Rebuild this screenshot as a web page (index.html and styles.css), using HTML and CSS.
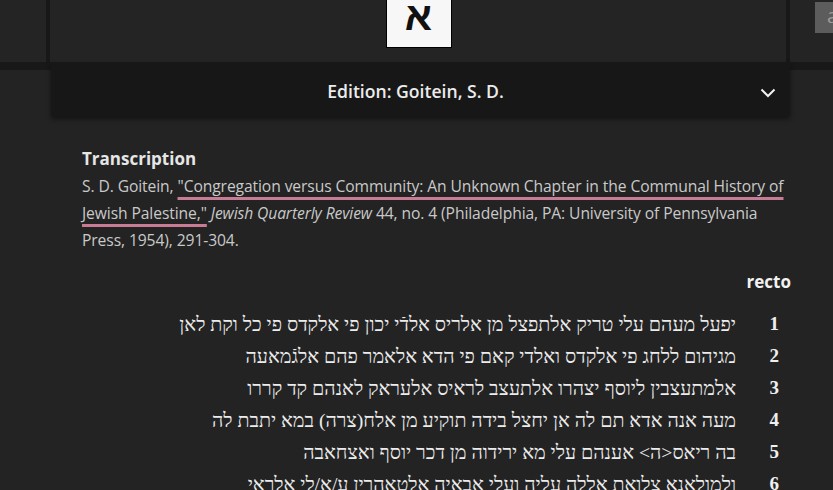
FILE: index.html
```html
<!DOCTYPE html>
<html lang="en">
<head>
<meta charset="utf-8">
<title>Document</title>
<link rel="stylesheet" href="styles.css">
</head>
<body>
<div class="viewer">
  <div class="panel panel-left"></div>
  <div class="panel panel-main">
    <div class="placeholder">א</div>
  </div>
  <div class="panel panel-right">
    <div class="tool-btn">a</div>
  </div>
</div>
<div class="band"></div>
<div class="edition">
  <span class="edition-title">Edition: Goitein, S. D.</span>
  <svg class="chevron" width="16" height="10" viewBox="0 0 16 10"><path d="M1.5 1.5 L8 8 L14.5 1.5" fill="none" stroke="#f2f2f2" stroke-width="2"/></svg>
</div>
<section class="transcription">
  <h2 class="heading">Transcription</h2>
  <p class="citation">S. D. Goitein, <a class="link">"Congregation versus Community: An Unknown Chapter in the Communal History of Jewish Palestine,"</a> <em>Jewish Quarterly Review</em> 44, no. 4 (Philadelphia, PA: University of Pennsylvania Press, 1954), 291-304.</p>
  <div class="side-label">recto</div>
  <ol class="lines">
    <li><span class="num">1</span><span class="txt">יפעל מעהם עלי טריק אלתפצל מן אלריס אלדֿי יכון פי אלקדס פי כל וקת לאן</span></li>
    <li><span class="num">2</span><span class="txt">מגיהום ללחג פי אלקדס ואלדי קאם פי הדא אלאמר פהם אלגֿמאעה</span></li>
    <li><span class="num">3</span><span class="txt">אלמתעצבין ליוסף יצהרו אלתעצב לראיס אלעראק לאנהם קד קררו</span></li>
    <li><span class="num">4</span><span class="txt">מעה אנה אדא תם לה אן יחצל בידה תוקיע מן אלח(צרה) במא יתבת לה</span></li>
    <li><span class="num">5</span><span class="txt">בה ריאס&lt;ה&gt; אענהם עלי מא ירידוה מן דכר יוסף ואצחאבה</span></li>
    <li><span class="num">6</span><span class="txt">ולמולאנא צלואת אללה עליה ועלי אבאיה אלטאהרין ע/א/לי אלראי</span></li>
  </ol>
</section>
</body>
</html>
```

FILE: styles.css
```css
html, body {
  margin: 0;
  padding: 0;
}
body {
  background: #232323;
  font-family: "Open Sans", "Noto Sans", sans-serif;
  color: #d0d0d0;
  overflow: hidden;
  height: 490px;
}
.viewer {
  display: flex;
  gap: 4px;
  height: 62px;
  background: #181818;
}
.panel {
  background: #242424;
  position: relative;
}
.panel-left {
  width: 46px;
}
.panel-main {
  flex: 1;
  display: flex;
  justify-content: center;
  align-items: flex-start;
}
.panel-right {
  width: 43px;
}
.placeholder {
  width: 64px;
  height: 47px;
  margin-left: 1px;
  background: #f7f7f7;
  border: 1px solid #000;
  border-top: none;
  color: #111;
  font-family: "Liberation Sans", "DejaVu Sans", sans-serif;
  font-weight: bold;
  font-size: 40px;
  line-height: 32px;
  text-align: center;
  overflow: hidden;
}
.tool-btn {
  position: absolute;
  left: 25px;
  top: 2px;
  width: 26px;
  height: 31px;
  background: #5c5c5c;
  color: #9a9a9a;
  font-size: 20px;
  line-height: 28px;
  padding-left: 12px;
  box-sizing: border-box;
  overflow: hidden;
}
.band {
  height: 8px;
  background: #181818;
}
.edition {
  margin: -8px 43px 0 51px;
  height: 54px;
  background: #171717;
  box-shadow: 0 3px 5px rgba(0,0,0,0.45);
  display: flex;
  align-items: center;
  justify-content: center;
  position: relative;
  padding-right: 10px;
  box-sizing: border-box;
}
.edition-title {
  color: #ececec;
  font-weight: 600;
  font-size: 17.6px;
  letter-spacing: 0;
  padding-top: 4px;
}
.chevron {
  position: absolute;
  right: 14px;
  top: 26px;
}
.transcription {
  padding: 31px 43px 0 82px;
}
.heading {
  margin: 0;
  font-size: 17px;
  font-weight: 700;
  color: #e6e6e6;
  line-height: 24px;
}
.citation {
  margin: 2px 0 0 0;
  font-size: 15.65px;
  line-height: 27px;
  color: #c9c9c9;
  letter-spacing: -0.1px;
}
.link {
  color: #c9c9c9;
  text-decoration: underline;
  text-decoration-color: #c77b94;
  text-decoration-thickness: 2.5px;
  text-underline-offset: 5px;
}
.citation em {
  font-style: italic;
}
.side-label {
  margin-top: 16px;
  text-align: right;
  font-weight: 700;
  font-size: 17px;
  color: #f2f2f2;
  line-height: 24px;
  margin-right: -1px;
}
.lines {
  list-style: none;
  margin: 14px 11px 0 0;
  padding: 0;
  direction: rtl;
}
.lines li {
  display: flex;
  height: 32px;
  align-items: center;
}
.num {
  width: 43px;
  flex: none;
  font-family: "Liberation Serif", serif;
  font-weight: 700;
  font-size: 19px;
  color: #f0f0f0;
}
.txt {
  font-family: "Liberation Serif", "DejaVu Sans", serif;
  font-size: 19.7px;
  color: #ececec;
  white-space: nowrap;
}
```
